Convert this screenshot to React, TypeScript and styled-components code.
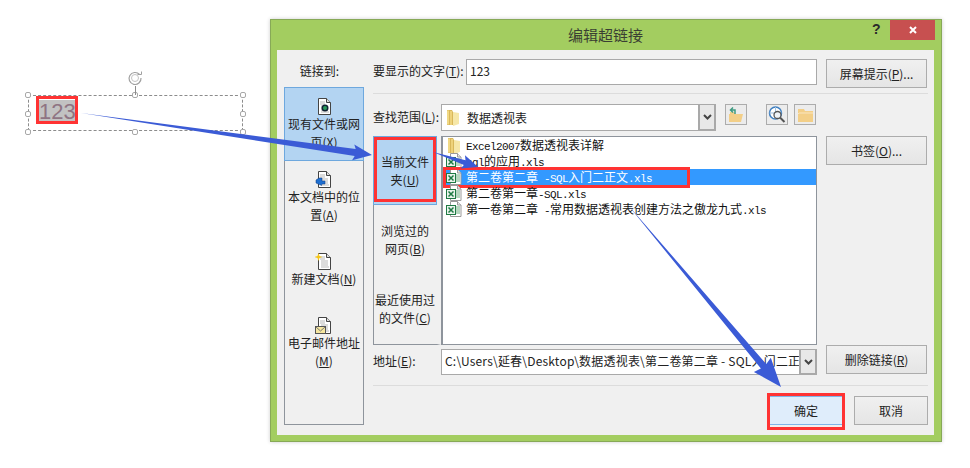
import React from 'react';
import styled, { createGlobalStyle } from 'styled-components';

const Global = createGlobalStyle`
  html, body { margin: 0; padding: 0; background: #fff; }
  body { font-family: "Noto Sans CJK SC", "Liberation Sans", sans-serif; font-size: 12px; color: #222; }
  u { text-decoration-thickness: 1px; text-underline-offset: 1px; }
`;

const Stage = styled.div`
  position: relative; width: 970px; height: 468px; overflow: hidden; display: flex; background: #fff;
`;
const SlideArea = styled.div`
  width: 270px; flex: none; padding: 95px 0 0 28px; box-sizing: border-box;
`;
const SelectionBox = styled.div`
  position: relative; width: 215px; height: 36px; box-sizing: border-box;
  border: 1px dashed #8c8c8c; padding: 4px 0 0 10px;
`;
const Selected = styled.div`
  position: relative; width: 37px; height: 21px; background: #c2c2c2; color: #8f7483;
  font: 22px/23px "Liberation Sans", sans-serif;
`;
const Handle = styled.i<{ $x: number; $y: number }>`
  position: absolute; width: 6px; height: 6px; box-sizing: border-box; background: #fff;
  border: 1px solid #a8a8a8; border-radius: 2px;
  left: ${p => p.$x}px; top: ${p => p.$y}px;
`;
const RotateLine = styled.i`
  position: absolute; left: 106px; top: -10px; width: 1px; height: 9px; background: #8c8c8c;
`;
const RotateIcon = styled.svg`
  position: absolute; left: 98px; top: -26px; width: 16px; height: 16px;
`;
const Dialog = styled.section`
  width: 672px; height: 423px; margin-top: 19px; box-sizing: border-box; background: #a3cd60;
  border: 1px solid #87a957; box-shadow: 0 0 4px rgba(0,0,0,.2); display: flex; flex-direction: column;
  padding: 0 7px 6px 6px;
`;
const TitleBar = styled.header`
  height: 30px; flex: none; display: flex; align-items: flex-start; position: relative;
`;
const Title = styled.h1`
  flex: 1; margin: 5px 0 0; text-align: center; font-weight: 400; font-size: 15px; line-height: 20px; color: #3a3f33;
`;
const Help = styled.span`
  position: absolute; left: 595px; top: 0; font: bold 14px/18px "Liberation Sans", sans-serif; color: #2a2a2a;
`;
const Close = styled.span`
  position: absolute; left: 613px; top: 0; width: 45px; height: 20px; background: #c75050; color: #fff;
  display: flex; align-items: center; justify-content: center;
`;
const Body = styled.div`
  flex: 1; background: #f0f0f0; display: flex; padding: 9px 6px 0 7px; gap: 9px; min-height: 0;
`;
const LinkCol = styled.nav`
  width: 80px; flex: none; display: flex; flex-direction: column;
`;
const LinkHead = styled.div`
  height: 28px; line-height: 24px; text-align: center; padding-right: 9px;
`;
const LinkPanel = styled.div`
  height: 338px; box-sizing: border-box; border: 1px solid #8e949c; display: flex; flex-direction: column;
`;
const LinkItem = styled.div<{ $active?: boolean }>`
  height: 73px; margin: ${p => (p.$active ? '-1px -1px 0' : '0')}; box-sizing: border-box; flex: none;
  ${p => (p.$active ? 'background:#b3d4f2;border:1px solid #6ea8de;height:74px;' : '')}
  display: flex; flex-direction: column; align-items: center; justify-content: center;
  text-align: center; line-height: 18px; color: #222; padding: 0 2px;
`;
const Main = styled.div`
  width: 555px; flex: none; display: flex; flex-direction: column;
`;
const Row = styled.div<{ $h: number; $mb?: number }>`
  display: flex; gap: 9px; height: ${p => p.$h}px; margin-bottom: ${p => p.$mb ?? 0}px; flex: none;
`;
const FieldLabel = styled.label<{ $w: number; $top?: number }>`
  width: ${p => p.$w}px; flex: none; line-height: 24px; white-space: nowrap; padding-top: ${p => p.$top ?? 0}px;
`;
const TextInput = styled.div`
  width: 351px; height: 26px; box-sizing: border-box; border: 1px solid #a9a9a9; background: #fff; flex: none;
  padding-left: 3px; line-height: 22px; overflow: hidden; white-space: nowrap; position: relative;
`;
const AddressInput = styled(TextInput)`
  width: 376px; margin-top: 4px; padding-left: 3px;
`;
const AddressText = styled.span`
  display: block; width: 354px; overflow: hidden; letter-spacing: .2px;
`;
const Button = styled.button<{ $w?: number }>`
  width: ${p => p.$w ?? 101}px; height: 29px; flex: none; box-sizing: border-box; border: 1px solid #acacac;
  background: linear-gradient(#f0f0f0, #e5e5e5); font: 12px "Noto Sans CJK SC", sans-serif; color: #222; padding: 0;
  position: relative;
`;
const OkButton = styled(Button)`
  background: #dfedfb; border: 0; border-top: 1px solid #7fb4e8; border-bottom: 1px solid #7fb4e8;
`;
const Divider = styled.hr<{ $mb: number }>`
  margin: 0 0 ${p => p.$mb}px; border: 0; height: 1px; background: #dcdcdc; flex: none;
`;
const Combo = styled.div`
  width: 275px; height: 27px; flex: none; box-sizing: border-box; border: 1px solid #a9a9a9; background: #fff;
  display: flex; align-items: center; position: relative; padding-left: 3px; gap: 6px;
`;
const ComboArrow = styled.span`
  position: absolute; right: -1px; top: -1px; bottom: -1px; width: 18px; box-sizing: border-box;
  border: 2px solid #a9a9a9; border-top-width: 1px; background: #e8e8e8; display: flex; align-items: center; justify-content: center;
`;
const ToolBtn = styled.span<{ $ml: number }>`
  width: 22px; height: 21px; box-sizing: border-box; border: 1px solid #acacac; background: #ececec;
  margin-left: ${p => p.$ml}px; flex: none; display: flex; align-items: center; justify-content: center;
`;
const Tabs = styled.div`
  width: 68px; flex: none; box-sizing: border-box; border-left: 1px solid #8e949c; border-bottom: 1px solid #8e949c;
  border-right: 4px solid #f0f0f0; display: flex; flex-direction: column; position: relative; height: 209px;
`;
const Tab = styled.div<{ $active?: boolean }>`
  height: 69px; flex: none; margin-left: -1px; box-sizing: border-box; position: relative;
  display: flex; align-items: center; justify-content: center; text-align: center; line-height: 18px; color: #222;
  white-space: nowrap;
  ${p => (p.$active ? 'background:#b3d4f2;border:1px solid #6ea8de;' : '')}
`;
const FileList = styled.ul`
  width: 376px; flex: none; height: 209px; margin: 0 0 0 -9px; padding: 0; box-sizing: border-box; list-style: none;
  background: #fff; border: 1px solid #8e949c; border-left: 2px solid #8e949c; position: relative;
`;
const FileRow = styled.li<{ $sel?: boolean }>`
  height: 16px; display: flex; align-items: center; position: relative; gap: 3px; padding-left: 1px;
  background: ${p => (p.$sel ? '#3399ff' : 'transparent')}; color: ${p => (p.$sel ? '#fff' : '#111')};
  line-height: 16px; white-space: nowrap;
`;
const IconSlot = styled.span`
  width: 19px; height: 16px; flex: none; display: flex; justify-content: center;
`;
const Mono = styled.span`
  font: 11px "Liberation Mono", monospace; letter-spacing: -.6px; white-space: pre;
`;
const RedMark = styled.i<{ $inset: string; $w?: number }>`
  position: absolute; inset: ${p => p.$inset}; ${p => (p.$w ? `width:${p.$w}px;right:auto;` : '')}
  border: 3px solid #ff3333; box-sizing: border-box; pointer-events: none;
`;
const Footer = styled.div`
  display: flex; justify-content: flex-end; gap: 11px;
`;
const Overlay = styled.svg`
  position: absolute; left: 0; top: 0; width: 970px; height: 468px; pointer-events: none;
`;

const Folder = () => (
  <svg width="16" height="18" viewBox="0 0 16 18">
    <path d="M2 1h5l1 2v13H2z" fill="#d8b75a" />
    <path d="M8 3l6 1v11l-6 2z" fill="#f6e7a8" />
    <path d="M3 1.500v14" stroke="#f1d985" strokeWidth="2" />
    <path d="M6 2v14" stroke="#eed27a" strokeWidth="2" />
  </svg>
);
const Xls = () => (
  <svg width="17" height="16" viewBox="0 0 17 16">
    <path d="M5.500 .5h7l3.500 3.500v11.500h-10.500z" fill="#fff" stroke="#9a9a9a" />
    <path d="M12.500 .5v3.500h3.500" fill="#e6e6e6" stroke="#9a9a9a" />
    <path d="M11 6h4M11 8h4M11 10h4M11 12h4" stroke="#6ead80" />
    <rect x="1.500" y="4.500" width="9" height="9" fill="#e9f3ec" stroke="#1f7a44" />
    <path d="M3.500 6.500l5 5M8.500 6.500l-5 5" stroke="#1f7a44" strokeWidth="1.500" />
  </svg>
);
const DocBase = ({ children }: { children?: React.ReactNode }) => (
  <svg width="18" height="17" viewBox="0 0 18 17">
    <path d="M3.500 .5h8l4 4v12h-12z" fill="#fff" stroke="#444" />
    <path d="M11.500 .5v4h4" fill="#ddd" stroke="#444" />
    <path d="M5 4h5M5 6h5M6 8h7M6 10h7M6 12h7M6 14h8" stroke="#b9b9b9" />
    {children}
  </svg>
);
const ChevronDown = () => (
  <svg width="9" height="6" viewBox="0 0 9 6"><path d="M1 1l3.500 3.500L8 1" fill="none" stroke="#444" strokeWidth="2" /></svg>
);

function arrow(x0: number, y0: number, x1: number, y1: number, hl: number, hw: number, sw: number) {
  const d = Math.hypot(x1 - x0, y1 - y0);
  const ux = (x1 - x0) / d, uy = (y1 - y0) / d;
  const nx = -uy, ny = ux;
  const bx = x1 - ux * hl, by = y1 - uy * hl;
  const p = (x: number, y: number) => `${x.toFixed(1)},${y.toFixed(1)}`;
  return [
    p(x0, y0),
    p(bx + nx * sw / 2, by + ny * sw / 2),
    p(bx + nx * hw / 2 - ux * 2, by + ny * hw / 2 - uy * 2),
    p(x1, y1),
    p(bx - nx * hw / 2 - ux * 2, by - ny * hw / 2 - uy * 2),
    p(bx - nx * sw / 2, by - ny * sw / 2),
  ].join(' ');
}

const handles: [number, number][] = [
  [-4, -4], [103, -4], [211, -4], [-4, 15], [211, 15], [-4, 33], [103, 33], [211, 33],
];

export default function App() {
  return (
    <Stage>
      <Global />
      <SlideArea>
        <SelectionBox>
          <Selected>123<RedMark $inset="-4px -2px -3px -3px" /></Selected>
          {handles.map(([x, y]) => <Handle key={`${x}-${y}`} $x={x} $y={y} />)}
          <RotateLine />
          <RotateIcon viewBox="0 0 16 16">
            <path d="M12.500 4.500A6 6 0 1 0 14 8" fill="none" stroke="#a0a0a0" strokeWidth="1.200" />
            <circle cx="8" cy="8" r="3.500" fill="none" stroke="#c4c4c4" />
            <path d="M10.500 4.500h4v-3" fill="none" stroke="#a0a0a0" />
          </RotateIcon>
        </SelectionBox>
      </SlideArea>
      <Dialog>
        <TitleBar>
          <Title>编辑超链接</Title>
          <Help>?</Help>
          <Close>
            <svg width="8" height="8" viewBox="0 0 8 8"><path d="M1 1l6 6M7 1l-6 6" stroke="#fff" strokeWidth="2" /></svg>
          </Close>
        </TitleBar>
        <Body>
          <LinkCol>
            <LinkHead>链接到:</LinkHead>
            <LinkPanel>
              <LinkItem $active>
                <DocBase><circle cx="10" cy="10" r="3.500" fill="#123" /><circle cx="10" cy="10" r="2" fill="#2a9a5a" /></DocBase>
                <span>现有文件或网<br />页(<u>X</u>)</span>
              </LinkItem>
              <LinkItem>
                <DocBase><path d="M7 7v3h3v3H7l-.5 1.500L1 12V9l3-2z" fill="#1f6fd0" stroke="#123f80" strokeWidth=".5" /></DocBase>
                <span>本文档中的位<br />置(<u>A</u>)</span>
              </LinkItem>
              <LinkItem>
                <DocBase><path d="M3.500 0l1 3 3 1-3 1-1 3-1-3-3-1 3-1z" fill="#f5c518" /></DocBase>
                <span>新建文档(<u>N</u>)</span>
              </LinkItem>
              <LinkItem>
                <DocBase>
                  <rect x="0.500" y="9.500" width="10" height="7" fill="#f6e7a0" stroke="#555" />
                  <path d="M1 10l4.500 4 4.500-4" fill="none" stroke="#777" />
                </DocBase>
                <span>电子邮件地址<br />(<u>M</u>)</span>
              </LinkItem>
            </LinkPanel>
          </LinkCol>
          <Main>
            <Row $h={29} $mb={5}>
              <FieldLabel $w={84}>要显示的文字(<u>T</u>):</FieldLabel>
              <TextInput>123</TextInput>
              <Button>屏幕提示(<u>P</u>)...</Button>
            </Row>
            <Divider $mb={10} />
            <Row $h={27} $mb={5}>
              <FieldLabel $w={59} $top={1}>查找范围(<u>L</u>):</FieldLabel>
              <Combo>
                <Folder />
                <span>数据透视表</span>
                <ComboArrow><ChevronDown /></ComboArrow>
              </Combo>
              <ToolBtn $ml={0}>
                <svg width="16" height="16" viewBox="0 0 16 16">
                  <path d="M1 7h1V5h4l1 2h8l-2 8H1z" fill="#f3cf88" />
                  <path d="M7 7V3H3m2-2.500L2.500 3 5 5.500" fill="none" stroke="#3f9a80" strokeWidth="1.500" />
                </svg>
              </ToolBtn>
              <ToolBtn $ml={10}>
                <svg width="18" height="18" viewBox="0 0 18 18">
                  <circle cx="7.500" cy="7" r="6" fill="#fff" stroke="#3f7fc0" strokeWidth="1.500" />
                  <path d="M1.500 7h12M7.500 1v12" stroke="#9fc0e0" />
                  <circle cx="9.500" cy="9" r="3.500" fill="#eef3f8" stroke="#555" strokeWidth="1.300" />
                  <path d="M12 11.500l4.500 4.500" stroke="#555" strokeWidth="2" />
                </svg>
              </ToolBtn>
              <ToolBtn $ml={-3}>
                <svg width="17" height="14" viewBox="0 0 17 14">
                  <path d="M1 1h6l1 2h8v11H1z" fill="#f3cf88" />
                  <path d="M1 6l1-1h14" fill="none" stroke="#fae6c0" />
                </svg>
              </ToolBtn>
            </Row>
            <Row $h={209}>
              <Tabs>
                <Tab $active>
                  <span>当前文件<br />夹(<u>U</u>)</span>
                  <RedMark $inset="0 0 2px 0" />
                </Tab>
                <Tab><span>浏览过的<br />网页(<u>B</u>)</span></Tab>
                <Tab><span>最近使用过<br />的文件(<u>C</u>)</span></Tab>
              </Tabs>
              <FileList>
                <FileRow><IconSlot><Folder /></IconSlot><span><Mono>Excel2007</Mono>数据透视表详解</span></FileRow>
                <FileRow><IconSlot><Xls /></IconSlot><span><Mono>sql</Mono>的应用<Mono>.xls</Mono></span></FileRow>
                <FileRow $sel>
                  <IconSlot><Xls /></IconSlot><span>第二卷第二章<Mono> -SQL</Mono>入门二正文<Mono>.xls</Mono></span>
                  <RedMark $inset="-2px auto -3px 0" $w={247} />
                </FileRow>
                <FileRow><IconSlot><Xls /></IconSlot><span>第二卷第一章<Mono>-SQL.xls</Mono></span></FileRow>
                <FileRow><IconSlot><Xls /></IconSlot><span>第一卷第二章<Mono> -</Mono>常用数据透视表创建方法之傲龙九式<Mono>.xls</Mono></span></FileRow>
              </FileList>
              <Button>书签(<u>O</u>)...</Button>
            </Row>
            <Row $h={30} $mb={10}>
              <FieldLabel $w={59} $top={4}>地址(<u>E</u>):</FieldLabel>
              <AddressInput>
                <AddressText>C:\Users\延春\Desktop\数据透视表\第二卷第二章 - SQL入门二正</AddressText>
                <ComboArrow><ChevronDown /></ComboArrow>
              </AddressInput>
              <Button>删除链接(<u>R</u>)</Button>
            </Row>
            <Divider $mb={10} />
            <Footer>
              <OkButton $w={74}>确定<RedMark $inset="-4px -2px -6px -2px" /></OkButton>
              <Button $w={74}>取消</Button>
            </Footer>
          </Main>
        </Body>
      </Dialog>
      <Overlay viewBox="0 0 970 468">
        <polygon fill="#3b5bd6" points={arrow(81, 113, 372, 155, 17, 16, 7)} />
        <polygon fill="#3b5bd6" points={arrow(433, 152, 478, 167, 14, 14, 5)} />
        <polygon fill="#3b5bd6" points={arrow(628, 205, 781, 387, 27, 22, 7)} />
      </Overlay>
    </Stage>
  );
}
